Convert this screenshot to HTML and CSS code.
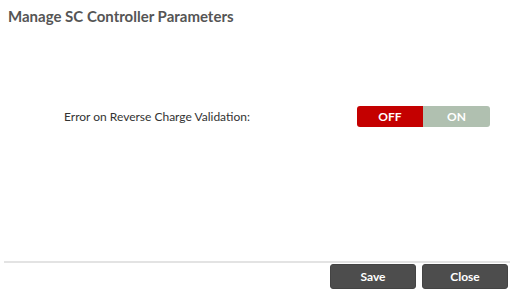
FILE: index.html
```html
<!DOCTYPE html>
<html>
<head>
<meta charset="utf-8">
<link rel="stylesheet" href="styles.css">
</head>
<body>
<div class="dialog">
  <div class="header">Manage SC Controller Parameters</div>
  <div class="content">
    <div class="row">
      <div class="label">Error on Reverse Charge Validation:</div>
      <div class="toggle">
        <span class="opt off active">OFF</span>
        <span class="opt on">ON</span>
      </div>
    </div>
  </div>
  <div class="footer">
    <button class="btn">Save</button>
    <button class="btn">Close</button>
  </div>
</div>
</body>
</html>
```
FILE: styles.css
```css
html, body {
  margin: 0;
  padding: 0;
  background: #fff;
}
body {
  font-family: Lato, "Open Sans", sans-serif;
}
.dialog {
  width: 514px;
  height: 298px;
  display: flex;
  flex-direction: column;
}
.header {
  padding: 7px 8px 0 8px;
  font-size: 15px;
  font-weight: bold;
  color: #555;
  height: 24px;
  line-height: 18px;
}
.content {
  flex: 1;
  padding-top: 75px;
}
.row {
  display: flex;
  align-items: center;
  padding-left: 64px;
}
.label {
  width: 293px;
  font-size: 12px;
  color: #333;
}
.toggle {
  display: flex;
  height: 21px;
}
.opt {
  width: 66px;
  display: flex;
  align-items: center;
  justify-content: center;
  font-size: 12px;
  font-weight: bold;
  color: #fff;
}
.off {
  background: #c40000;
  border-radius: 3px 0 0 3px;
}
.on {
  width: 67px;
  background: #b0c0b0;
  border-radius: 0 3px 3px 0;
}
.footer {
  margin: 0 4px;
  border-top: 2px solid #e3e3e3;
  display: flex;
  justify-content: flex-end;
  gap: 6px;
  padding: 1px 2px 9px 0;
}
.btn {
  width: 86px;
  height: 25px;
  background: #4d4d4d;
  color: #fff;
  border: 1px solid #444;
  border-radius: 3px;
  font-family: Lato, "Open Sans", sans-serif;
  font-size: 12px;
  font-weight: bold;
  padding: 0;
}
```
